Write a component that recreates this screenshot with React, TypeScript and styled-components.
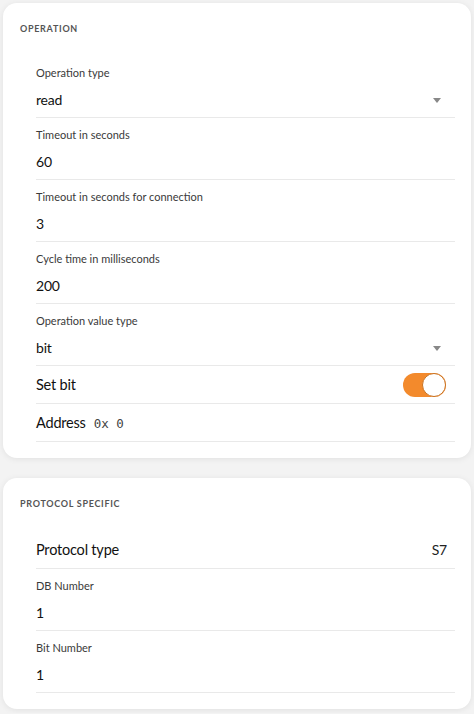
import React from 'react';
import styled, { createGlobalStyle } from 'styled-components';

const GlobalStyle = createGlobalStyle`
  body {
    margin: 0;
    background: #f3f3f3;
    font-family: Lato, "Noto Sans", sans-serif;
    color: #222;
  }
`;

const Page = styled.div`
  display: flex;
  flex-direction: column;
  gap: 20px;
  padding: 3px 3px 4px 3px;
  width: 468px;
`;

const Card = styled.section`
  background: #fff;
  border-radius: 14px;
  box-shadow: 0 1px 6px rgba(0, 0, 0, 0.08);
  padding: 20px 16px 16px 17px;
`;

const Heading = styled.h2`
  margin: 0 0 22px 0;
  font-size: 9px;
  line-height: 11px;
  font-weight: 700;
  letter-spacing: 0.7px;
  color: #555;
  text-transform: uppercase;
`;

const List = styled.div`
  margin-left: 16px;
  display: flex;
  flex-direction: column;
`;

const Field = styled.div`
  display: flex;
  flex-direction: column;
  height: 62px;
  box-sizing: border-box;
  padding-top: 10px;
  border-bottom: 1px solid #e9e9e9;
`;

const Label = styled.div`
  font-size: 11px;
  color: #3a3a3a;
  line-height: 13px;
`;

const ValueRow = styled.div`
  display: flex;
  align-items: center;
  justify-content: space-between;
  margin-top: 13px;
  font-size: 14px;
  letter-spacing: -0.2px;
  line-height: 16px;
  color: #111;
  padding-right: 14px;
`;

const Caret = styled.span`
  width: 0;
  height: 0;
  border-left: 4px solid transparent;
  border-right: 4px solid transparent;
  border-top: 5px solid #888;
`;

const Row = styled.div`
  display: flex;
  align-items: center;
  justify-content: space-between;
  height: 38px;
  box-sizing: border-box;
  border-bottom: 1px solid #e9e9e9;
  font-size: 14.5px;
  letter-spacing: -0.2px;
  color: #111;
`;

const Mono = styled.span`
  font-family: "DejaVu Sans Mono", monospace;
  font-size: 12.5px;
  letter-spacing: 0;
  color: #444;
  margin-left: 8px;
`;

const Toggle = styled.span`
  display: inline-flex;
  justify-content: flex-end;
  width: 43px;
  height: 24px;
  border-radius: 12px;
  background: #f38a2c;
  margin-right: 9px;
  box-sizing: border-box;
`;

const Knob = styled.span`
  width: 24px;
  height: 24px;
  border-radius: 50%;
  background: #fff;
  border: 1.5px solid #c9711f;
  box-sizing: border-box;
`;

const RightText = styled.span`
  font-size: 14px;
  color: #222;
  margin-right: 8px;
`;

const fields = [
  { label: 'Operation type', value: 'read', select: true },
  { label: 'Timeout in seconds', value: '60' },
  { label: 'Timeout in seconds for connection', value: '3' },
  { label: 'Cycle time in milliseconds', value: '200' },
  { label: 'Operation value type', value: 'bit', select: true },
];

const protocolFields = [
  { label: 'DB Number', value: '1' },
  { label: 'Bit Number', value: '1' },
];

export default function App() {
  return (
    <>
      <GlobalStyle />
      <Page>
        <Card>
          <Heading>Operation</Heading>
          <List>
            {fields.map((f) => (
              <Field key={f.label}>
                <Label>{f.label}</Label>
                <ValueRow>
                  <span>{f.value}</span>
                  {f.select && <Caret />}
                </ValueRow>
              </Field>
            ))}
            <Row>
              <span>Set bit</span>
              <Toggle>
                <Knob />
              </Toggle>
            </Row>
            <Row>
              <span>
                Address<Mono>0x 0</Mono>
              </span>
            </Row>
          </List>
        </Card>
        <Card>
          <Heading>Protocol specific</Heading>
          <List>
            <Row>
              <span>Protocol type</span>
              <RightText>S7</RightText>
            </Row>
            {protocolFields.map((f) => (
              <Field key={f.label}>
                <Label>{f.label}</Label>
                <ValueRow>
                  <span>{f.value}</span>
                </ValueRow>
              </Field>
            ))}
          </List>
        </Card>
      </Page>
    </>
  );
}
